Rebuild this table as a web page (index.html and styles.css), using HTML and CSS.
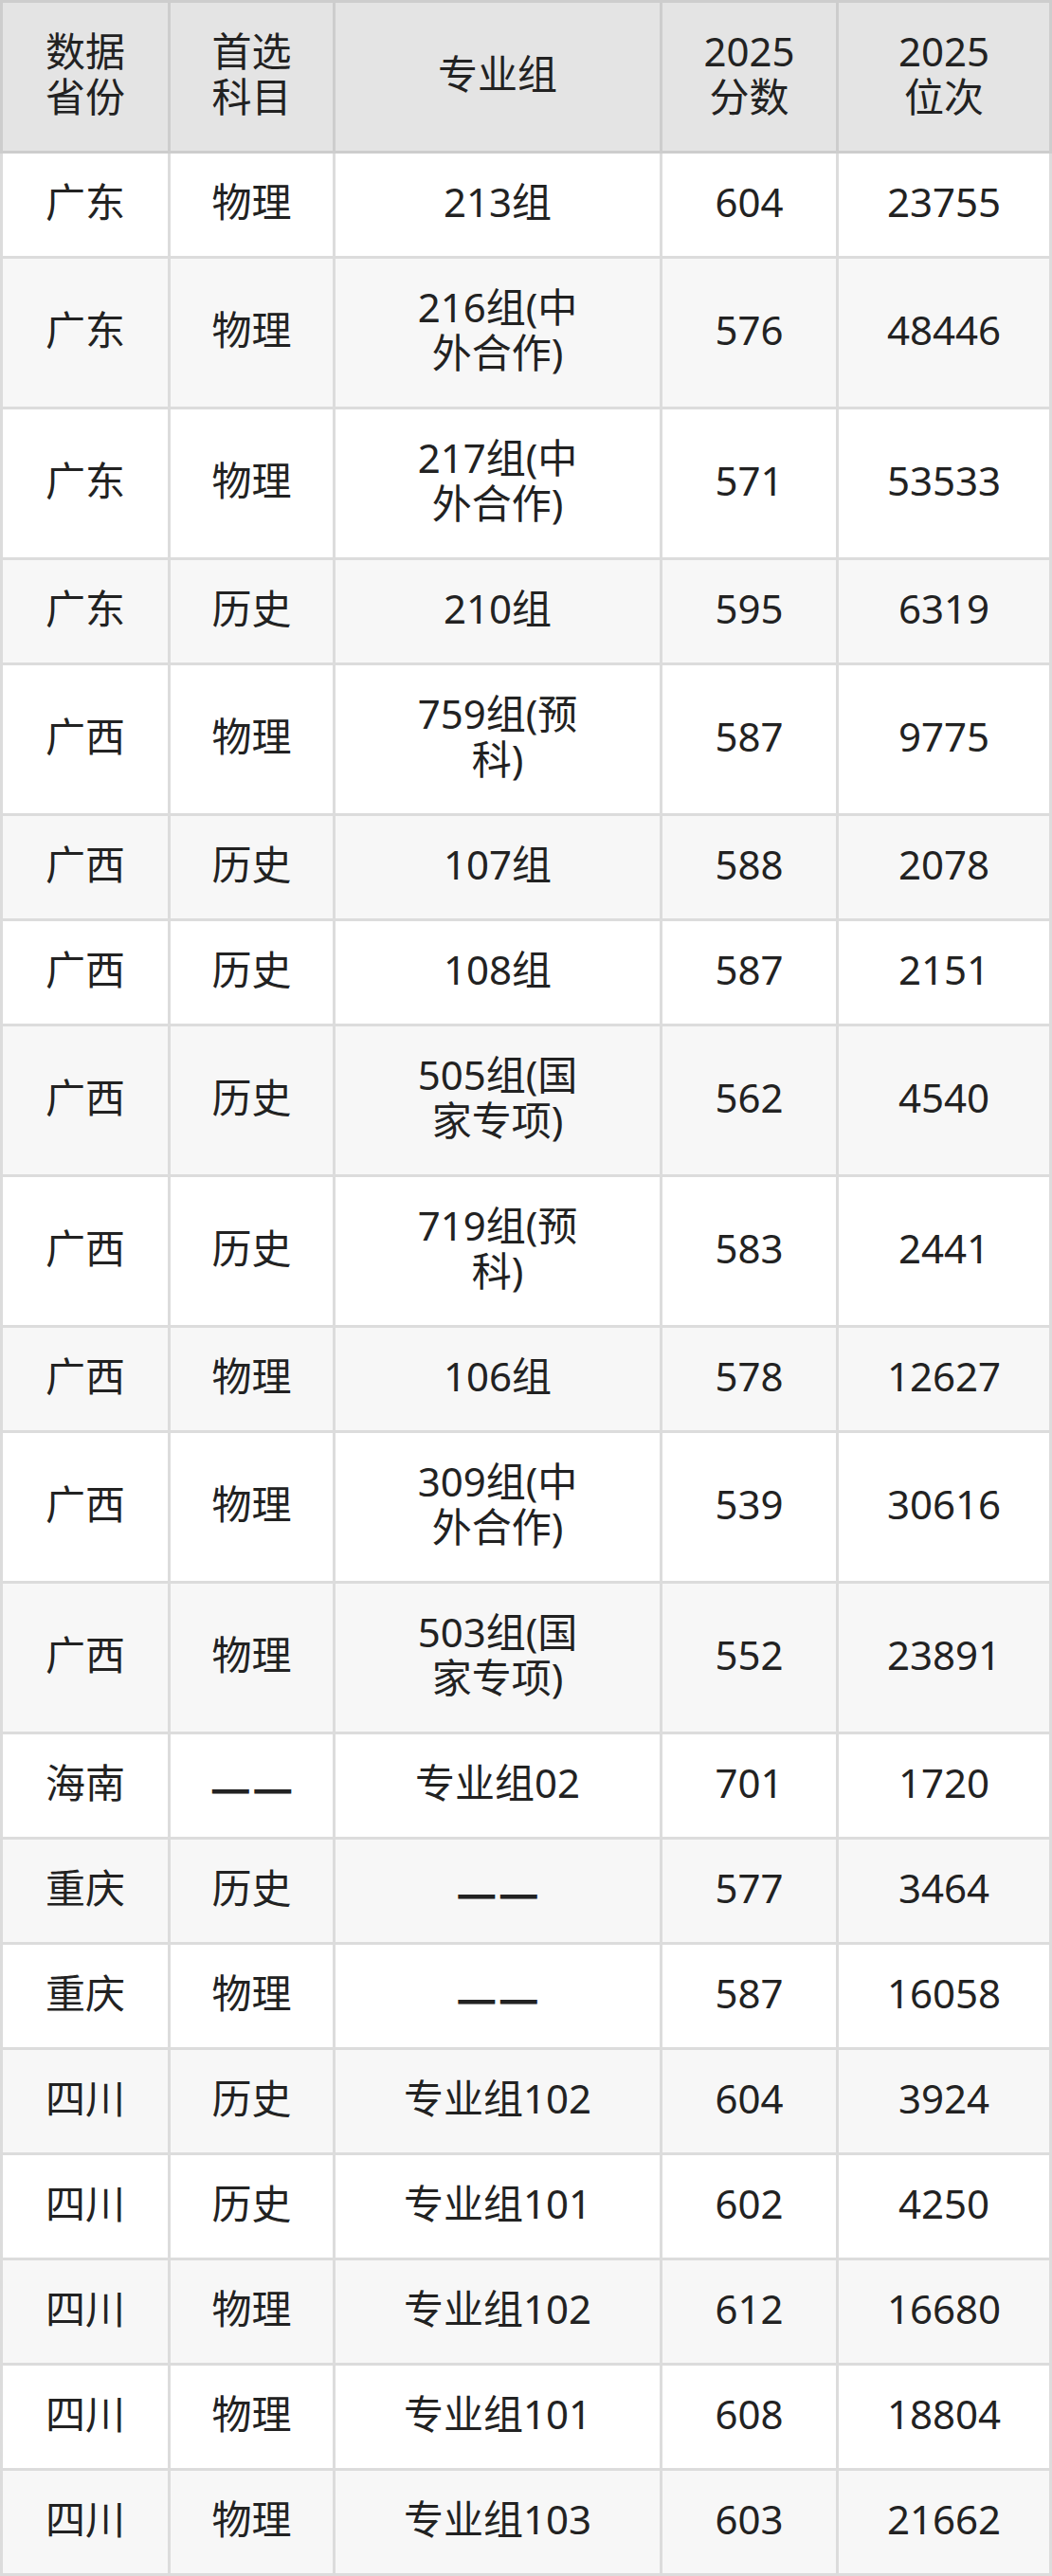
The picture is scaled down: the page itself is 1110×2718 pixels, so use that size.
FILE: index.html
```html
<!DOCTYPE html>
<html lang="zh-CN">
<head>
<meta charset="utf-8">
<title>录取分数</title>
<link rel="stylesheet" href="styles.css">
</head>
<body>
<table class="score-table">
  <thead>
    <tr>
      <th class="c1">数据省份</th>
      <th class="c2">首选科目</th>
      <th class="c3">专业组</th>
      <th class="c4">2025分数</th>
      <th class="c5">2025位次</th>
    </tr>
  </thead>
  <tbody>
    <tr><td class="c1">广东</td><td class="c2">物理</td><td class="c3">213组</td><td class="c4">604</td><td class="c5">23755</td></tr>
    <tr><td class="c1">广东</td><td class="c2">物理</td><td class="c3">216组(中外合作)</td><td class="c4">576</td><td class="c5">48446</td></tr>
    <tr><td class="c1">广东</td><td class="c2">物理</td><td class="c3">217组(中外合作)</td><td class="c4">571</td><td class="c5">53533</td></tr>
    <tr><td class="c1">广东</td><td class="c2">历史</td><td class="c3">210组</td><td class="c4">595</td><td class="c5">6319</td></tr>
    <tr><td class="c1">广西</td><td class="c2">物理</td><td class="c3">759组(预科)</td><td class="c4">587</td><td class="c5">9775</td></tr>
    <tr><td class="c1">广西</td><td class="c2">历史</td><td class="c3">107组</td><td class="c4">588</td><td class="c5">2078</td></tr>
    <tr><td class="c1">广西</td><td class="c2">历史</td><td class="c3">108组</td><td class="c4">587</td><td class="c5">2151</td></tr>
    <tr><td class="c1">广西</td><td class="c2">历史</td><td class="c3">505组(国家专项)</td><td class="c4">562</td><td class="c5">4540</td></tr>
    <tr><td class="c1">广西</td><td class="c2">历史</td><td class="c3">719组(预科)</td><td class="c4">583</td><td class="c5">2441</td></tr>
    <tr><td class="c1">广西</td><td class="c2">物理</td><td class="c3">106组</td><td class="c4">578</td><td class="c5">12627</td></tr>
    <tr><td class="c1">广西</td><td class="c2">物理</td><td class="c3">309组(中外合作)</td><td class="c4">539</td><td class="c5">30616</td></tr>
    <tr><td class="c1">广西</td><td class="c2">物理</td><td class="c3">503组(国家专项)</td><td class="c4">552</td><td class="c5">23891</td></tr>
    <tr><td class="c1">海南</td><td class="c2"><span class="dash"><span class="bar">—</span><span class="bar">—</span></span></td><td class="c3">专业组02</td><td class="c4">701</td><td class="c5">1720</td></tr>
    <tr><td class="c1">重庆</td><td class="c2">历史</td><td class="c3"><span class="dash"><span class="bar">—</span><span class="bar">—</span></span></td><td class="c4">577</td><td class="c5">3464</td></tr>
    <tr><td class="c1">重庆</td><td class="c2">物理</td><td class="c3"><span class="dash"><span class="bar">—</span><span class="bar">—</span></span></td><td class="c4">587</td><td class="c5">16058</td></tr>
    <tr><td class="c1">四川</td><td class="c2">历史</td><td class="c3">专业组102</td><td class="c4">604</td><td class="c5">3924</td></tr>
    <tr><td class="c1">四川</td><td class="c2">历史</td><td class="c3">专业组101</td><td class="c4">602</td><td class="c5">4250</td></tr>
    <tr><td class="c1">四川</td><td class="c2">物理</td><td class="c3">专业组102</td><td class="c4">612</td><td class="c5">16680</td></tr>
    <tr><td class="c1">四川</td><td class="c2">物理</td><td class="c3">专业组101</td><td class="c4">608</td><td class="c5">18804</td></tr>
    <tr><td class="c1">四川</td><td class="c2">物理</td><td class="c3">专业组103</td><td class="c4">603</td><td class="c5">21662</td></tr>
  </tbody>
</table>
</body>
</html>
```

FILE: styles.css
```css
html, body {
  margin: 0;
  padding: 0;
  background: #ffffff;
}

.score-table {
  width: 1110px;
  table-layout: fixed;
  border-collapse: separate;
  border-spacing: 0;
  font-family: "Noto Sans", "Noto Sans CJK SC", sans-serif;
  font-size: 42px;
  line-height: 48px;
  color: #222222;
}

.score-table th,
.score-table td {
  box-sizing: border-box;
  padding: 27px 36px 33px;
  text-align: center;
  vertical-align: middle;
  font-weight: normal;
  border-right: 3px solid #dcdcdc;
  border-bottom: 3px solid #dcdcdc;
}

.score-table th {
  background: #e4e4e4;
  border-color: #cdcdcd;
  border-top: 3px solid #cdcdcd;
}

.score-table .c1 { width: 180px; border-left: 3px solid #dcdcdc; }
.score-table th.c1 { border-left-color: #cdcdcd; }
.score-table .c2 { width: 174px; }
.score-table .c3 { width: 345px; padding-left: 69px; padding-right: 69px; }
.score-table .c4 { width: 186px; }
.score-table .c5 { width: 225px; padding-left: 46px; padding-right: 46px; }

.score-table tbody tr:nth-child(odd) td { background: #ffffff; }
.score-table tbody tr:nth-child(even) td { background: #f7f7f7; }

.dash {
  display: inline-flex;
  gap: 1px;
  vertical-align: top;
  height: 48px;
}

.bar {
  display: block;
  height: 48px;
  font-family: "Noto Sans CJK SC", sans-serif;
  font-size: 48px;
  font-weight: 700;
  line-height: 53px;
  white-space: nowrap;
}
```
